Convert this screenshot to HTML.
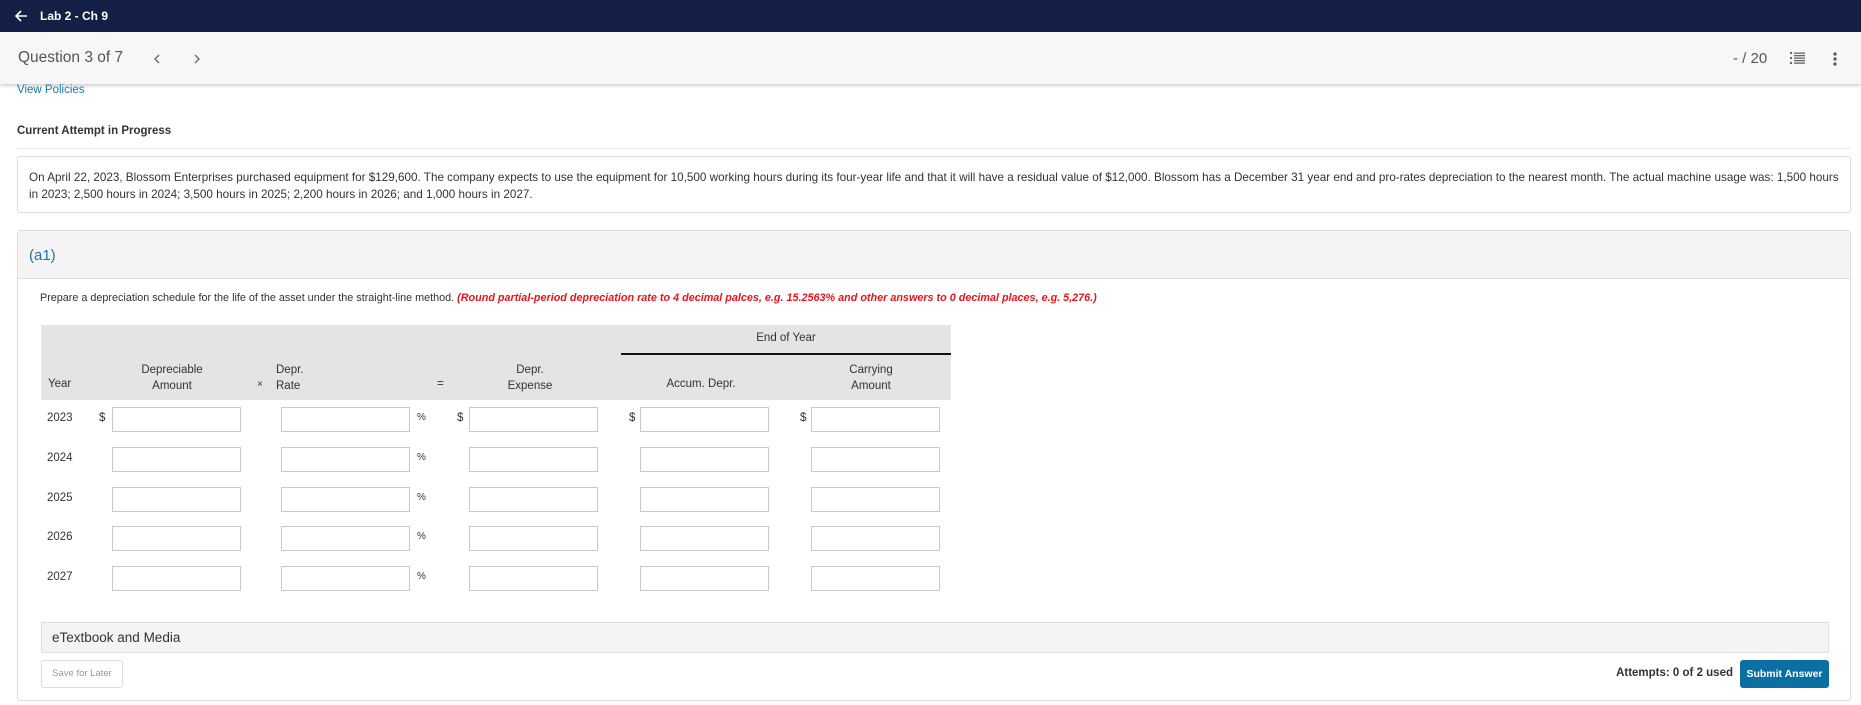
<!DOCTYPE html>
<html><head><meta charset="utf-8"><style>
*{box-sizing:border-box;margin:0;padding:0}
body{width:1861px;height:705px;overflow:hidden;background:#fff;font-family:"Liberation Sans",sans-serif;color:#222;position:relative}
.a{position:absolute}
.nav{left:0;top:0;width:1861px;height:32px;background:#141f45;color:#fff;font-weight:bold;font-size:12px}
.qbar{left:0;top:32px;width:1861px;height:52px;background:#f7f7f7;box-shadow:0 2px 3px rgba(0,0,0,.18)}
.inp{position:absolute;width:129px;height:25px;border:1px solid #c8c8c8;background:#fff}
.t{position:absolute;font-size:11.5px;color:#333}
.h{position:absolute;font-size:11.5px;color:#333;text-align:center}
</style></head><body>
<div class="a nav">
<svg class="a" style="left:14px;top:9px" width="14" height="14" viewBox="0 0 14 14"><path d="M13 7H2M7 2L2 7l5 5" stroke="#fff" stroke-width="1.6" fill="none"/></svg>
<div class="a" style="left:40px;top:9px">Lab 2 - Ch 9</div></div>
<div class="a qbar">
<div class="a" style="left:18px;top:17px;font-size:15.5px;color:#555">Question 3 of 7</div>
<svg class="a" style="left:154px;top:22px" width="6" height="10" viewBox="0 0 6 10"><path d="M5 1L1 5l4 4" stroke="#666" stroke-width="1.3" fill="none"/></svg>
<svg class="a" style="left:194px;top:22px" width="6" height="10" viewBox="0 0 6 10"><path d="M1 1l4 4-4 4" stroke="#666" stroke-width="1.3" fill="none"/></svg>
<div class="a" style="left:1733px;top:18px;font-size:15px;color:#555">- / 20</div>
<svg class="a" style="left:1790px;top:20px" width="16" height="13" viewBox="0 0 16 13"><g fill="#666"><rect x="0" y="0" width="2" height="2"/><rect x="0" y="5" width="2" height="2"/><rect x="0" y="10" width="2" height="2"/><rect x="4" y="0.5" width="11" height="1.3"/><rect x="4" y="5.5" width="11" height="1.3"/><rect x="4" y="10.5" width="11" height="1.3"/><rect x="4" y="3" width="11" height="1.3"/><rect x="4" y="8" width="11" height="1.3"/></g></svg>
<svg class="a" style="left:1833px;top:20px" width="4" height="14"><circle cx="2" cy="2" r="1.6" fill="#555"/><circle cx="2" cy="7" r="1.6" fill="#555"/><circle cx="2" cy="12" r="1.6" fill="#555"/></svg>
</div>
<div class="a" style="left:17px;top:84px;font-size:11.5px;color:#1e73a8">View Policies</div>
<div class="a" style="left:17px;top:125px;font-size:11.5px;font-weight:bold;color:#333">Current Attempt in Progress</div>
<div class="a" style="left:17px;top:148px;width:1834px;height:1px;background:#e6e6e6"></div>
<div class="a" style="left:17px;top:156px;width:1834px;height:57px;border:1px solid #ddd;border-radius:3px"></div>
<div class="a" style="left:29px;top:169px;font-size:11.7px;white-space:nowrap;line-height:17px;color:#333">On April 22, 2023, Blossom Enterprises purchased equipment for $129,600. The company expects to use the equipment for 10,500 working hours during its four-year life and that it will have a residual value of $12,000. Blossom has a December 31 year end and pro-rates depreciation to the nearest month. The actual machine usage was: 1,500 hours<br>in 2023; 2,500 hours in 2024; 3,500 hours in 2025; 2,200 hours in 2026; and 1,000 hours in 2027.</div>
<div class="a" style="left:17px;top:230px;width:1834px;height:471px;border:1px solid #ddd;border-radius:3px"></div>
<div class="a" style="left:18px;top:231px;width:1832px;height:48px;background:#f4f4f4;border-bottom:1px solid #ddd"></div>
<div class="a" style="left:29px;top:247px;font-size:15px;color:#1e73a8">(a1)</div>
<div class="a" style="left:40px;top:292px;font-size:10.8px;color:#333;white-space:nowrap">Prepare a depreciation schedule for the life of the asset under the straight-line method. <b style="color:#e8141b;font-style:italic">(Round partial-period depreciation rate to 4 decimal palces, e.g. 15.2563% and other answers to 0 decimal places, e.g. 5,276.)</b></div>
<div class="a" style="left:41px;top:325px;width:910px;height:75px;background:#e4e4e4"></div>
<div class="a" style="left:621px;top:353px;width:330px;height:1.5px;background:#111"></div>
<div class="h" style="left:621px;top:332px;width:330px">End of Year</div>
<div class="t" style="left:48px;top:378px">Year</div>
<div class="h" style="left:112px;top:362px;width:120px;line-height:16px">Depreciable<br>Amount</div>
<div class="t" style="left:257px;top:379px;font-size:10px">×</div>
<div class="t" style="left:276px;top:362px;line-height:16px">Depr.<br>Rate</div>
<div class="t" style="left:437px;top:378px">=</div>
<div class="h" style="left:470px;top:362px;width:120px;line-height:16px">Depr.<br>Expense</div>
<div class="h" style="left:640px;top:378px;width:122px">Accum. Depr.</div>
<div class="h" style="left:811px;top:362px;width:120px;line-height:16px">Carrying<br>Amount</div>

<div class="t" style="left:47px;top:412px">2023</div><div class="t" style="left:99px;top:412px">$</div>
<div class="t" style="left:457px;top:412px">$</div><div class="t" style="left:629px;top:412px">$</div><div class="t" style="left:800px;top:412px">$</div>
<div class="inp" style="left:112px;top:407px"></div><div class="inp" style="left:281px;top:407px"></div><div class="t" style="left:417px;top:412px;font-size:10px">%</div><div class="inp" style="left:469px;top:407px"></div><div class="inp" style="left:640px;top:407px"></div><div class="inp" style="left:811px;top:407px"></div>

<div class="t" style="left:47px;top:452px">2024</div>
<div class="inp" style="left:112px;top:447px"></div><div class="inp" style="left:281px;top:447px"></div><div class="t" style="left:417px;top:452px;font-size:10px">%</div><div class="inp" style="left:469px;top:447px"></div><div class="inp" style="left:640px;top:447px"></div><div class="inp" style="left:811px;top:447px"></div>

<div class="t" style="left:47px;top:492px">2025</div>
<div class="inp" style="left:112px;top:487px"></div><div class="inp" style="left:281px;top:487px"></div><div class="t" style="left:417px;top:492px;font-size:10px">%</div><div class="inp" style="left:469px;top:487px"></div><div class="inp" style="left:640px;top:487px"></div><div class="inp" style="left:811px;top:487px"></div>

<div class="t" style="left:47px;top:531px">2026</div>
<div class="inp" style="left:112px;top:526px"></div><div class="inp" style="left:281px;top:526px"></div><div class="t" style="left:417px;top:531px;font-size:10px">%</div><div class="inp" style="left:469px;top:526px"></div><div class="inp" style="left:640px;top:526px"></div><div class="inp" style="left:811px;top:526px"></div>

<div class="t" style="left:47px;top:571px">2027</div>
<div class="inp" style="left:112px;top:566px"></div><div class="inp" style="left:281px;top:566px"></div><div class="t" style="left:417px;top:571px;font-size:10px">%</div><div class="inp" style="left:469px;top:566px"></div><div class="inp" style="left:640px;top:566px"></div><div class="inp" style="left:811px;top:566px"></div>

<div class="a" style="left:41px;top:622px;width:1788px;height:31px;background:#f4f4f4;border:1px solid #ddd;border-radius:2px"></div>
<div class="a" style="left:52px;top:630px;font-size:13.5px;color:#333">eTextbook and Media</div>
<div class="a" style="left:41px;top:660px;width:82px;height:28px;border:1px solid #ddd;border-radius:3px;font-size:9.5px;color:#999;text-align:center;line-height:26px">Save for Later</div>
<div class="a" style="left:1560px;top:667px;width:173px;text-align:right;font-size:11.5px;font-weight:bold;color:#333">Attempts: 0 of 2 used</div>
<div class="a" style="left:1740px;top:660px;width:89px;height:28px;background:#0b6fa4;border-radius:3px;color:#fff;font-size:10.5px;font-weight:bold;text-align:center;line-height:28px">Submit Answer</div>
</body></html>
